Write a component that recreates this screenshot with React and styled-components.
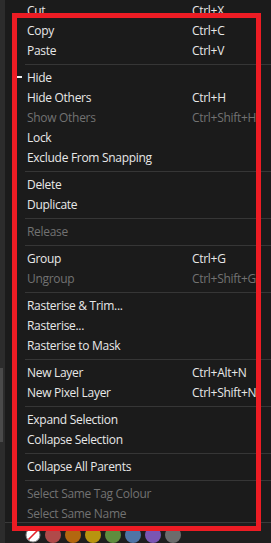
import React from "react";
import styled, { createGlobalStyle } from "styled-components";

const GlobalStyle = createGlobalStyle`
  html, body {
    margin: 0;
    padding: 0;
    background: #1e1e1e;
    overflow: hidden;
  }
  body {
    font-family: "Open Sans", "Noto Sans", sans-serif;
  }
`;

const items = [
  { label: "Cut", shortcut: "Ctrl+X" },
  { label: "Copy", shortcut: "Ctrl+C" },
  { label: "Paste", shortcut: "Ctrl+V" },
  { sep: true },
  { label: "Hide", mixed: true },
  { label: "Hide Others", shortcut: "Ctrl+H" },
  { label: "Show Others", shortcut: "Ctrl+Shift+H", disabled: true },
  { label: "Lock" },
  { label: "Exclude From Snapping" },
  { sep: true },
  { label: "Delete" },
  { label: "Duplicate" },
  { sep: true },
  { label: "Release", disabled: true },
  { sep: true },
  { label: "Group", shortcut: "Ctrl+G" },
  { label: "Ungroup", shortcut: "Ctrl+Shift+G", disabled: true },
  { sep: true },
  { label: "Rasterise & Trim..." },
  { label: "Rasterise..." },
  { label: "Rasterise to Mask" },
  { sep: true },
  { label: "New Layer", shortcut: "Ctrl+Alt+N" },
  { label: "New Pixel Layer", shortcut: "Ctrl+Shift+N" },
  { sep: true },
  { label: "Expand Selection" },
  { label: "Collapse Selection" },
  { sep: true },
  { label: "Collapse All Parents" },
  { sep: true },
  { label: "Select Same Tag Colour", disabled: true },
  { label: "Select Same Name", disabled: true },
];

const swatches = ["#b04a4a", "#b3670f", "#b8940f", "#5f8d3e", "#4f74a6", "#7a55b3", "#6c6c6c"];

const App = () => {
  return (
    <>
      <GlobalStyle />
      <Page>
        <SideStrip>
          <ScrollThumb />
        </SideStrip>
        <Main>
          <Menu>
            {items.map((item, i) =>
              item.sep ? (
                <Separator key={i} />
              ) : (
                <MenuItem key={i} $disabled={item.disabled}>
                  <Check>{item.mixed && <Dash />}</Check>
                  <Label>{item.label}</Label>
                  <Shortcut>{item.shortcut}</Shortcut>
                </MenuItem>
              )
            )}
          </Menu>
          <SwatchBar>
            <NoneSwatch>
              <svg width="16" height="16" viewBox="0 0 16 16">
                <circle cx="8" cy="8" r="7" fill="#fff" stroke="#8a8a8a" strokeWidth="1" />
                <line x1="3.5" y1="12.5" x2="12.5" y2="3.5" stroke="#e0262c" strokeWidth="1.6" />
              </svg>
            </NoneSwatch>
            {swatches.map((c) => (
              <Swatch key={c} $color={c} />
            ))}
          </SwatchBar>
        </Main>
        <Highlight />
      </Page>
    </>
  );
};

const Page = styled.div`
  position: relative;
  display: flex;
  width: 271px;
  height: 543px;
  overflow: hidden;
  background: #1e1e1e;
`;

const SideStrip = styled.div`
  width: 5px;
  flex-shrink: 0;
  background: #2c2c2c;
  display: flex;
  flex-direction: column;
  padding-top: 368px;
  box-sizing: border-box;
`;

const ScrollThumb = styled.div`
  width: 3px;
  height: 74px;
  background: #4a4a4a;
`;

const Main = styled.div`
  flex: 1;
  display: flex;
  flex-direction: column;
  min-width: 0;
`;

const Menu = styled.div`
  background: #1b1b1b;
  padding-bottom: 3px;
  border-bottom: 1px solid #3a3a3a;
  overflow: hidden;
`;

const MenuItem = styled.div`
  display: grid;
  grid-template-columns: 22px 165px 1fr;
  align-items: center;
  height: 20px;
  font-size: 12px;
  letter-spacing: -0.3px;
  color: ${(p) => (p.$disabled ? "#727272" : "#e8e8e8")};
  white-space: nowrap;
`;

const Check = styled.div`
  display: flex;
  justify-content: flex-end;
  padding-right: 5px;
`;

const Dash = styled.span`
  width: 5px;
  height: 2px;
  background: #f0f0f0;
`;

const Label = styled.span`
  overflow: hidden;
`;

const Shortcut = styled.span`
  overflow: visible;
`;

const Separator = styled.div`
  height: 1px;
  margin: 4px 0 2px 20px;
  background: #363636;
`;

const SwatchBar = styled.div`
  display: flex;
  gap: 4px;
  padding: 4px 0 0 20px;
`;

const Swatch = styled.div`
  width: 16px;
  height: 16px;
  border-radius: 50%;
  background: ${(p) => p.$color};
  flex-shrink: 0;
`;

const NoneSwatch = styled.div`
  width: 16px;
  height: 16px;
  flex-shrink: 0;
  svg {
    display: block;
  }
`;

const Highlight = styled.div`
  position: absolute;
  left: 12px;
  top: 13px;
  width: 249px;
  height: 518px;
  box-sizing: border-box;
  border: 5px solid #ed1c24;
  pointer-events: none;
`;

export default App;
